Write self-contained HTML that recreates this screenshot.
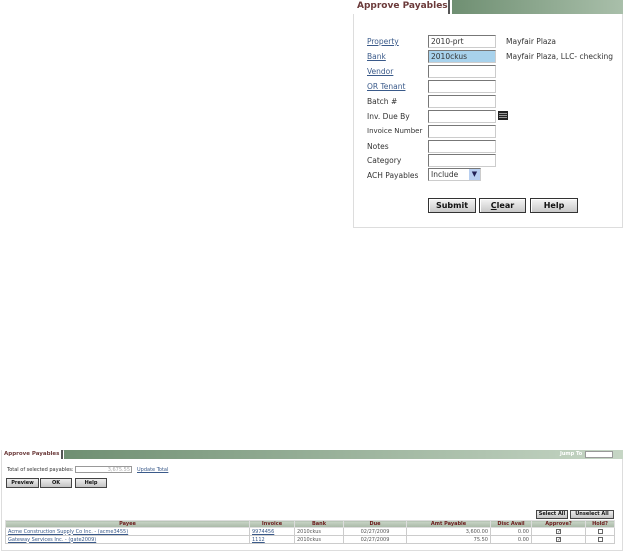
<!DOCTYPE html>
<html><head><meta charset="utf-8"><style>
*{box-sizing:border-box;margin:0;padding:0}
body{width:623px;height:551px;background:#fff;position:relative;overflow:hidden;font-family:"DejaVu Sans","Liberation Sans",sans-serif;color:#333}
.a{position:absolute;white-space:nowrap}
.lbl{position:absolute;left:367px;font-size:7.5px;color:#333;white-space:nowrap}
.lnk{color:#3a5a8a;text-decoration:underline}
.inp{position:absolute;left:428px;width:68px;height:13px;border:1px solid #777;border-right-color:#ccc;border-bottom-color:#ccc;background:#fff;font-size:7.5px;padding-left:2px;line-height:11px}
.btn{position:absolute;border:1px solid #333;background:linear-gradient(#f4f4f4,#c8c8c8);font-weight:bold;font-size:8px;text-align:center;color:#111;box-shadow:inset 1px 1px #fff}
.sb{border:1px solid #444;background:linear-gradient(#eee,#c4c4c4);font-weight:bold;font-size:5px;text-align:center;position:absolute;color:#111;white-space:nowrap}
table{border-collapse:collapse;font-size:5px}
td{border:1px solid #ccc;height:8px;padding:0 2px;color:#555;white-space:nowrap}
th{background:linear-gradient(#c8d4c6,#a8b8a6);color:#6a1a1a;font-size:5px;height:7px;border:1px solid #ddd}
.cb{display:inline-block;width:5px;height:5px;border:1px solid #666;background:#fff;vertical-align:middle;font-size:5px;line-height:4px;text-align:center}
</style></head><body>
<!-- top panel -->
<div class="a" style="left:353px;top:0;width:270px;height:228px;border:1px solid #ddd;border-top:none"></div>
<div class="a" style="left:452px;top:0;width:171px;height:14px;background:linear-gradient(90deg,#6f8f72,#a9bfaa)"></div>
<div class="a" style="left:353px;top:0;width:97px;height:14px;background:#fff;border-right:2px solid #555;font-weight:bold;font-size:9px;color:#6b3a3a;padding:1px 0 0 4px">Approve Payables</div>
<div class="lbl lnk" style="top:37px">Property</div><div class="inp" style="top:35px">2010-prt</div><div class="lbl" style="left:506px;top:37px">Mayfair Plaza</div>
<div class="lbl lnk" style="top:52px">Bank</div><div class="inp" style="top:50px;background:#a8d2ec">2010ckus</div><div class="lbl" style="left:506px;top:52px">Mayfair Plaza, LLC- checking</div>
<div class="lbl lnk" style="top:67px">Vendor</div><div class="inp" style="top:65px"></div>
<div class="lbl lnk" style="top:82px">OR Tenant</div><div class="inp" style="top:80px"></div>
<div class="lbl" style="top:97px">Batch #</div><div class="inp" style="top:95px"></div>
<div class="lbl" style="top:112px">Inv. Due By</div><div class="inp" style="top:110px"></div>
<div class="a" style="left:498px;top:111px;width:10px;height:9px;background:repeating-linear-gradient(#222 0 1px,#999 1px 2px);border:1px solid #222"></div>
<div class="lbl" style="top:127px;font-size:7px">Invoice Number</div><div class="inp" style="top:125px"></div>
<div class="lbl" style="top:142px">Notes</div><div class="inp" style="top:140px"></div>
<div class="lbl" style="top:156px">Category</div><div class="inp" style="top:154px"></div>
<div class="lbl" style="top:171px">ACH Payables</div>
<div class="inp" style="top:168px;width:53px;height:13px">Include</div>
<div class="a" style="left:469px;top:169px;width:11px;height:11px;background:#b8cff0;color:#225;font-size:7px;text-align:center;line-height:11px">&#9660;</div>
<div class="btn" style="left:428px;top:198px;width:48px;height:15px;line-height:13px">Submit</div>
<div class="btn" style="left:479px;top:198px;width:47px;height:15px;line-height:13px"><u>C</u>lear</div>
<div class="btn" style="left:530px;top:198px;width:48px;height:15px;line-height:13px">Help</div>
<!-- bottom panel -->
<div class="a" style="left:1px;top:450px;width:622px;height:101px;border:1px solid #ddd"></div>
<div class="a" style="left:64px;top:450px;width:559px;height:9px;background:linear-gradient(90deg,#6f8f72,#c6d6c5)"></div>
<div class="a" style="left:2px;top:450px;width:61px;height:9px;background:#fff;border-right:2px solid #555;font-weight:bold;font-size:5.5px;color:#6b3a3a;padding-left:2px;line-height:9px">Approve Payables</div>
<div class="a" style="left:560px;top:451px;font-size:5px;color:#fff;font-weight:bold">Jump To</div>
<div class="a" style="left:585px;top:451px;width:28px;height:7px;background:#fff;border:1px solid #999"></div>
<div class="a" style="left:7px;top:467px;font-size:5px">Total of selected payables:</div>
<div class="a" style="left:75px;top:466px;width:57px;height:7px;border:1px solid #999;font-size:5px;color:#aaa;text-align:right;padding-right:1px">3,675.55</div>
<div class="a lnk" style="left:137px;top:467px;font-size:5px">Update Total</div>
<div class="sb" style="left:6px;top:478px;width:33px;height:10px;line-height:8px">Preview</div>
<div class="sb" style="left:40px;top:478px;width:32px;height:10px;line-height:8px">OK</div>
<div class="sb" style="left:75px;top:478px;width:32px;height:10px;line-height:8px">Help</div>
<div class="sb" style="left:536px;top:510px;width:32px;height:9px;line-height:7px">Select All</div>
<div class="sb" style="left:570px;top:510px;width:44px;height:9px;line-height:7px">Unselect All</div>
<table class="a" style="left:5px;top:520px;width:610px">
<tr><th style="width:244px">Payee</th><th style="width:45px">Invoice</th><th style="width:49px">Bank</th><th style="width:63px">Due</th><th style="width:84px">Amt Payable</th><th style="width:41px">Disc Avail</th><th style="width:54px">Approve?</th><th>Hold?</th></tr>
<tr><td class="lnk">Acme Construction Supply Co Inc. - (acme3455)</td><td class="lnk">9974456</td><td>2010ckus</td><td style="text-align:center">02/27/2009</td><td style="text-align:right">3,600.00</td><td style="text-align:right">0.00</td><td style="text-align:center"><span class="cb">&#10003;</span></td><td style="text-align:center"><span class="cb"></span></td></tr>
<tr><td class="lnk">Gateway Services Inc. - (gate2009)</td><td class="lnk">1112</td><td>2010ckus</td><td style="text-align:center">02/27/2009</td><td style="text-align:right">75.50</td><td style="text-align:right">0.00</td><td style="text-align:center"><span class="cb">&#10003;</span></td><td style="text-align:center"><span class="cb"></span></td></tr>
</table>
</body></html>
